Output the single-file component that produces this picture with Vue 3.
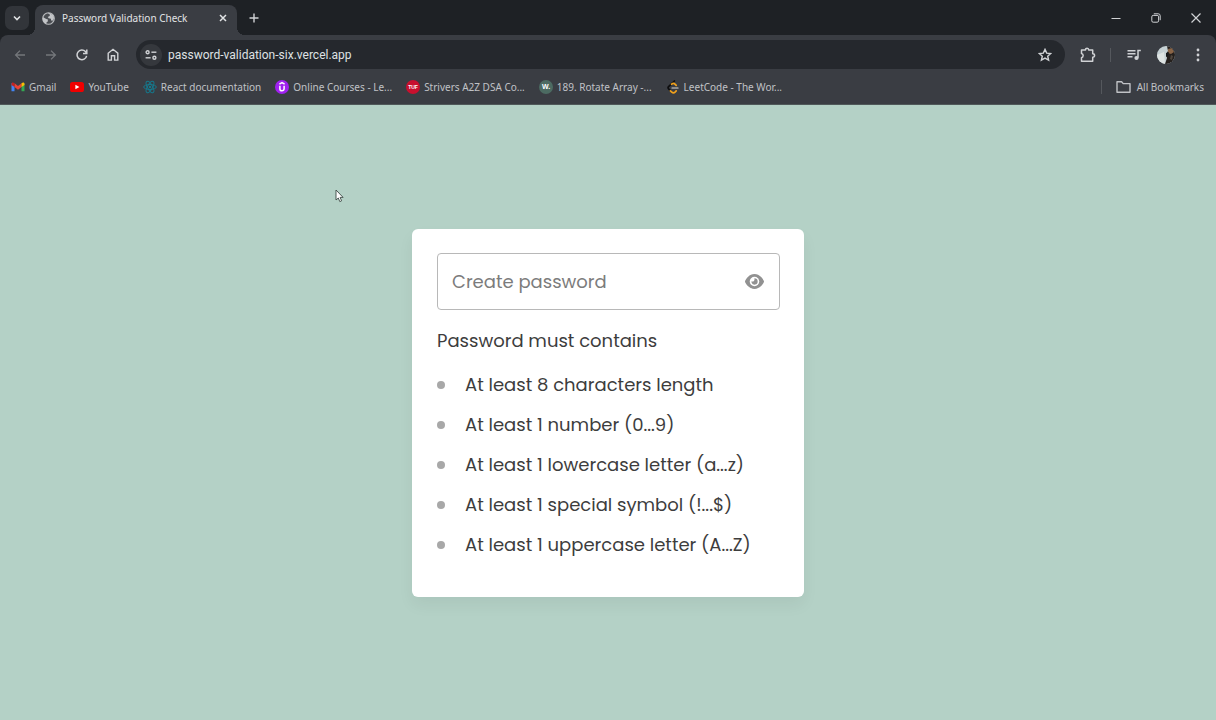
<script setup>
import { ref } from 'vue';

const address = ref('password-validation-six.vercel.app');
const password = ref('');
const visible = ref(false);

const bookmarks = [
  { icon: 'gmail', label: 'Gmail' },
  { icon: 'youtube', label: 'YouTube' },
  { icon: 'react', label: 'React documentation' },
  { icon: 'udemy', label: 'Online Courses - Le...' },
  { icon: 'tuf', label: 'Strivers A2Z DSA Co...' },
  { icon: 'rotate', label: '189. Rotate Array -...' },
  { icon: 'leetcode', label: 'LeetCode - The Wor...' }
];

const requirements = [
  { text: 'At least 8 characters length', test: /.{8,}/ },
  { text: 'At least 1 number (0...9)', test: /[0-9]/ },
  { text: 'At least 1 lowercase letter (a...z)', test: /[a-z]/ },
  { text: 'At least 1 special symbol (!...$)', test: /[^A-Za-z0-9]/ },
  { text: 'At least 1 uppercase letter (A...Z)', test: /[A-Z]/ }
];
</script>

<template>
  <div class="browser">
    <header class="chrome">
      <div class="tab-strip">
        <button class="tab-search" aria-label="Search tabs">
          <svg width="10" height="10" viewBox="0 0 10 10"><path d="M2 3.5l3 3 3-3" fill="none" stroke="currentColor" stroke-width="1.6" /></svg>
        </button>
        <div class="tab">
          <svg class="globe" width="13" height="13" viewBox="0 0 14 14">
            <circle cx="7" cy="7" r="6.2" fill="#4a4d52" stroke="#b9bbbe" stroke-width="1.3" />
            <path d="M1.2 5.6L4.6 7.6 6.4 8.2 6.2 10.2 4.8 11.2 4.6 13A6.3 6.3 0 0 1 1.2 5.6zM6.2 1L8 1.2 12 3.4 13 6.4 11.4 9.4 9.8 9.2 9.6 7.2 7.2 6.8 6.2 5.4 8.2 4.4 8.6 3z" fill="#c3c5c8" />
          </svg>
          <span class="tab-title">Password Validation Check</span>
          <button class="icon-btn tab-close" aria-label="Close tab">
            <svg width="8" height="8" viewBox="0 0 8 8"><path d="M1 1l6 6M7 1L1 7" stroke="currentColor" stroke-width="1.5" /></svg>
          </button>
        </div>
        <button class="icon-btn new-tab" aria-label="New tab">
          <svg width="10" height="10" viewBox="0 0 10 10"><path d="M5 0.5v9M0.5 5h9" stroke="currentColor" stroke-width="1.4" /></svg>
        </button>
        <div class="window-controls">
          <button class="icon-btn" aria-label="Minimize">
            <svg width="10" height="10" viewBox="0 0 10 10"><path d="M0.5 5.5h9" stroke="currentColor" /></svg>
          </button>
          <button class="icon-btn" aria-label="Restore">
            <svg width="10" height="10" viewBox="0 0 10 10" fill="none" stroke="currentColor">
              <rect x="0.8" y="2.4" width="6.8" height="6.8" rx="1.4" />
              <path d="M2.8 0.8h4.4a2 2 0 0 1 2 2v4.4" />
            </svg>
          </button>
          <button class="icon-btn" aria-label="Close">
            <svg width="10" height="10" viewBox="0 0 10 10"><path d="M0.5 0.5l9 9M9.5 0.5l-9 9" stroke="currentColor" stroke-width="1.2" /></svg>
          </button>
        </div>
      </div>

      <div class="toolbar">
        <button class="icon-btn nav-btn dim" aria-label="Back">
          <svg width="12" height="12" viewBox="0 0 12 12"><path d="M11 6H1.8M6 1.6L1.6 6 6 10.4" fill="none" stroke="currentColor" stroke-width="1.3" /></svg>
        </button>
        <button class="icon-btn nav-btn dim" aria-label="Forward">
          <svg width="12" height="12" viewBox="0 0 12 12"><path d="M1 6h9.2M6 1.6L10.4 6 6 10.4" fill="none" stroke="currentColor" stroke-width="1.3" /></svg>
        </button>
        <button class="icon-btn nav-btn" aria-label="Reload">
          <svg width="12" height="12" viewBox="0 0 12 12"><path d="M10.6 6.8A4.8 4.8 0 1 1 9.4 2.6L10.6 4M10.8 0.6V4.4H7" fill="none" stroke="currentColor" stroke-width="1.5" /></svg>
        </button>
        <button class="icon-btn nav-btn" aria-label="Home">
          <svg width="12" height="13" viewBox="0 0 12 13"><path d="M1.2 5.2L6 1.3l4.8 3.9v6.9H7.6V7.8H4.4v4.3H1.2z" fill="none" stroke="currentColor" stroke-width="1.4" /></svg>
        </button>
        <div class="omnibox">
          <button class="site-info" aria-label="View site information">
            <svg width="12" height="10" viewBox="0 0 12 10" fill="none" stroke="currentColor" stroke-width="1.4">
              <circle cx="2.6" cy="2.2" r="1.5" /><path d="M6.4 2.2h5" />
              <circle cx="9.4" cy="7.8" r="1.5" /><path d="M0.6 7.8h5" />
            </svg>
          </button>
          <input v-model="address" class="address" type="text" aria-label="Address bar" />
          <button class="icon-btn star" aria-label="Bookmark this tab">
            <svg width="14" height="14" viewBox="0 0 14 14"><path d="M7 1.4l1.7 3.7 4 .4-3 2.7.9 4L7 10.1l-3.6 2.1.9-4-3-2.7 4-.4z" fill="none" stroke="currentColor" stroke-width="1.4" /></svg>
          </button>
        </div>
        <button class="icon-btn extensions" aria-label="Extensions">
          <svg width="16" height="16" viewBox="0 0 16 16"><path d="M1.5 3h4c0-2.4 3.2-2.4 3.2 0h4v3.8c2.5 0 2.5 3.4 0 3.4v4.1H1.5v-3.5c2.2-.5 2.2-3.9 0-4.4z" fill="none" stroke="currentColor" stroke-width="1.5" stroke-linejoin="round" /></svg>
        </button>
        <span class="divider"></span>
        <button class="icon-btn media" aria-label="Media controls">
          <svg width="14" height="12" viewBox="0 0 14 12">
            <path d="M0.5 1.8h8M0.5 4.8h8M0.5 7.8h5M11 8.8V1.6h2.8" fill="none" stroke="currentColor" stroke-width="1.5" />
            <circle cx="9.5" cy="9" r="2.1" fill="currentColor" />
          </svg>
        </button>
        <button class="icon-btn avatar" aria-label="Profile">
          <svg width="18" height="18" viewBox="0 0 18 18">
            <clipPath id="avatar-clip"><circle cx="9" cy="9" r="9" /></clipPath>
            <g clip-path="url(#avatar-clip)">
              <path d="M0 0h18v18H0z" fill="#c5d0d3" />
              <path d="M0 9l7-3 1 12H0z" fill="#dde3e2" />
              <path d="M10 0h8v18H8l2-6-1-4 2-3z" fill="#25201d" />
              <path d="M11 3l4-1 2 4-3 2-3-1z" fill="#8a6547" />
              <path d="M9 7l3-1-1 4-2 1z" fill="#17191b" />
              <path d="M14 9l2 1-1 4-2-1z" fill="#51473e" />
            </g>
          </svg>
        </button>
        <button class="icon-btn menu" aria-label="Menu">
          <svg width="4" height="14" viewBox="0 0 4 14" fill="currentColor">
            <circle cx="2" cy="2" r="1.4" /><circle cx="2" cy="7" r="1.4" /><circle cx="2" cy="12" r="1.4" />
          </svg>
        </button>
      </div>

      <nav class="bookmarks" aria-label="Bookmarks">
        <a v-for="item in bookmarks" :key="item.icon" href="#" class="bookmark">
          <svg v-if="item.icon === 'gmail'" width="14" height="14" viewBox="0 0 14 14">
            <path d="M0.5 3v8.2h3V6z" fill="#4285f4" />
            <path d="M13.5 3v8.2h-3V6z" fill="#34a853" />
            <path d="M3.5 3.3L7 6l3.5-2.7v3.8L7 9.7 3.5 7.1z" fill="#ea4335" />
            <path d="M0.5 4.2C.5 2.4 2 2 3.5 3.3v3.8l-3-2.2z" fill="#c5221f" />
            <path d="M13.5 4.2c0-1.8-1.5-2.2-3-.9v3.8l3-2.2z" fill="#fbbc04" />
          </svg>
          <svg v-else-if="item.icon === 'youtube'" width="14" height="14" viewBox="0 0 14 14">
            <rect y="2" width="14" height="10" rx="2.6" fill="#f00000" />
            <path d="M5.4 4.8L9.4 7l-4 2.2z" fill="#fff" />
          </svg>
          <svg v-else-if="item.icon === 'react'" width="14" height="14" viewBox="0 0 14 14" fill="none" stroke="#16788c">
            <ellipse cx="7" cy="7" rx="6.3" ry="2.5" />
            <ellipse cx="7" cy="7" rx="6.3" ry="2.5" transform="rotate(60 7 7)" />
            <ellipse cx="7" cy="7" rx="6.3" ry="2.5" transform="rotate(120 7 7)" />
            <circle cx="7" cy="7" r="1.2" fill="#16788c" stroke="none" />
          </svg>
          <svg v-else-if="item.icon === 'udemy'" width="14" height="14" viewBox="0 0 14 14">
            <circle cx="7" cy="7" r="7" fill="#a020f0" />
            <path d="M4.4 4.200L7 2.700l2.600 1.500M4.900 5.800v2.900a2.100 2.100 0 0 0 4.200 0V5.800" fill="none" stroke="#fff" stroke-width="1.5" />
          </svg>
          <svg v-else-if="item.icon === 'tuf'" width="14" height="14" viewBox="0 0 14 14">
            <circle cx="7" cy="7" r="7" fill="#c8102e" />
            <text x="7" y="9" text-anchor="middle" class="tuf-text">TUF</text>
          </svg>
          <svg v-else-if="item.icon === 'rotate'" width="14" height="14" viewBox="0 0 14 14">
            <circle cx="7" cy="7" r="7" fill="#4c6b62" />
            <text x="7" y="9" text-anchor="middle" class="w-text">W.</text>
          </svg>
          <svg v-else width="14" height="14" viewBox="0 0 14 14" fill="none" stroke-linecap="round" stroke-width="1.7">
            <path d="M8.4 1L2.6 6.6a1.6 1.6 0 0 0 0 2.2l1.6 1.700" stroke="#0d0d0e" />
            <path d="M4.4 10.8l1.4 1.300c1 .9 2.300.9 3.200 0l1.200-1.300M5.600 4.200c1.200-1 2.600-.9 3.600.1l1 1" stroke="#f0a11c" />
            <path d="M6.2 8h5.6" stroke="#a8a8a8" />
          </svg>
          <span>{{ item.label }}</span>
        </a>
        <span class="divider all-divider"></span>
        <a href="#" class="bookmark all">
          <svg width="15" height="14" viewBox="0 0 15 14"><path d="M1 12.2V1.8h4.6l1.6 1.8H14v8.6z" fill="none" stroke="currentColor" stroke-width="1.4" stroke-linejoin="round" /></svg>
          <span>All Bookmarks</span>
        </a>
      </nav>
    </header>

    <main class="page">
      <section class="card">
        <div class="field">
          <input v-model="password" :type="visible ? 'text' : 'password'" placeholder="Create password" aria-label="Create password" />
          <button class="eye" aria-label="Show password" @click="visible = !visible">
            <svg width="19" height="17" viewBox="0 0 576 512">
              <path d="M288 32c-80.800 0-145.500 36.800-192.600 80.600C48.600 156 17.300 208 2.500 243.700c-3.300 7.900-3.300 16.700 0 24.600C17.300 304 48.600 356 95.400 399.400C142.500 443.200 207.200 480 288 480s145.500-36.800 192.600-80.600c46.800-43.500 78.100-95.400 93-131.100c3.300-7.900 3.300-16.700 0-24.600c-14.900-35.700-46.200-87.700-93-131.100C433.500 68.800 368.800 32 288 32z" fill="currentColor" />
              <circle cx="288" cy="256" r="144" fill="#fff" />
              <path d="M288 160a96 96 0 1 1-92.500 121.500c-1.900-6.900-2.900-13.800-3.200-20.700c-.2-5.800 6.200-9.200 11.700-7.400c6.400 2.100 13.200 3.300 20.300 3.300c35.300 0 64-28.700 64-64c0-7.100-1.200-13.900-3.300-20.300c-1.800-5.500 1.600-11.900 3-12.400z" fill="currentColor" />
            </svg>
          </button>
        </div>
        <p class="heading">Password must contains</p>
        <ul class="requirements">
          <li v-for="req in requirements" :key="req.text" :class="{ valid: req.test.test(password) }">
            <i class="dot"></i>
            <span>{{ req.text }}</span>
          </li>
        </ul>
      </section>
      <!-- Mouse pointer -->
      <svg class="pointer" width="9" height="14" viewBox="0 0 9 14"><path d="M1 1v10l2.300-2 1.500 3.600 1.800-.8-1.500-3.400h3z" fill="#fff" stroke="#3d4a45" stroke-width="0.9" /></svg>
    </main>
  </div>
</template>

<style>
body {
  margin: 0;
  background: #b4d1c6;
}
</style>

<style scoped>
* {
  box-sizing: border-box;
}

.browser {
  display: flex;
  flex-direction: column;
  min-height: 100vh;
  font-family: "Segoe UI", "Noto Sans", sans-serif;
  font-size: 11px;
}

button {
  padding: 0;
  border: none;
  background: none;
  color: inherit;
  cursor: pointer;
}

svg {
  display: block;
  flex-shrink: 0;
}

.icon-btn {
  display: flex;
  align-items: center;
  justify-content: center;
  flex-shrink: 0;
}

/* Browser frame */
.chrome {
  background: #1e2125;
  color: #d0d2d5;
}

.tab-strip {
  display: flex;
  align-items: center;
  height: 35px;
  padding-left: 5px;
}

.tab-search {
  display: flex;
  align-items: center;
  justify-content: center;
  width: 24px;
  height: 24px;
  border-radius: 7px;
  background: #32353a;
  color: #e0e2e4;
}

.tab {
  position: relative;
  display: flex;
  align-items: center;
  align-self: flex-end;
  gap: 7px;
  width: 202px;
  height: 30px;
  margin-left: 6px;
  padding: 0 8px 4px 7px;
  border-radius: 8px 8px 0 0;
  background: #3a3d43;
  color: #e1e3e5;
}

.tab::before,
.tab::after {
  content: "";
  position: absolute;
  bottom: 0;
  width: 8px;
  height: 8px;
}

.tab::before {
  right: 100%;
  background: radial-gradient(circle at 0 0, transparent 8px, #3a3d43 8px);
}

.tab::after {
  left: 100%;
  background: radial-gradient(circle at 100% 0, transparent 8px, #3a3d43 8px);
}

.tab-title {
  flex: 1;
  white-space: nowrap;
  font-size: 10px;
}

.tab-close {
  width: 12px;
  height: 16px;
}

.new-tab {
  width: 24px;
  height: 24px;
  margin-left: 5px;
}

.window-controls {
  display: flex;
  margin-left: auto;
}

.window-controls .icon-btn {
  width: 40px;
  height: 34px;
}

.toolbar {
  display: flex;
  align-items: center;
  height: 39px;
  padding: 0 8px 0 4px;
  border-radius: 8px 8px 0 0;
  background: #3a3d43;
}

.nav-btn {
  width: 31px;
  height: 28px;
}

.dim {
  color: #74777b;
}

.omnibox {
  display: flex;
  align-items: center;
  flex: 1;
  height: 29px;
  margin-left: 8px;
  padding: 0 13px 0 4px;
  border-radius: 15px;
  background: #25282d;
}

.site-info {
  display: flex;
  align-items: center;
  justify-content: center;
  width: 22px;
  height: 22px;
  border-radius: 50%;
  background: #35383d;
}

.address {
  flex: 1;
  min-width: 0;
  padding: 0 0 0 6px;
  border: none;
  outline: none;
  background: none;
  color: #dfe1e3;
  font-family: "Segoe UI", Roboto, sans-serif;
  font-size: 12px;
}

.extensions {
  width: 30px;
  height: 28px;
  margin-left: 8px;
}

.divider {
  width: 1px;
  height: 14px;
  background: #55585d;
}

.toolbar .divider {
  margin: 0 7px;
}

.media {
  width: 32px;
  height: 28px;
}

.avatar {
  width: 18px;
  height: 18px;
  margin-left: 7px;
}

.menu {
  width: 20px;
  height: 28px;
  margin-left: 13px;
}

.bookmarks {
  display: flex;
  align-items: center;
  gap: 14px;
  height: 31px;
  padding: 0 12px 5px 11px;
  border-bottom: 1px solid #50595a;
  background: #3a3d43;
}

.bookmark {
  display: flex;
  align-items: center;
  gap: 4px;
  color: #c0c2c6;
  font-size: 10px;
  text-decoration: none;
  white-space: nowrap;
}

.all-divider {
  margin-left: auto;
}

.all {
  gap: 6px;
}

.tuf-text,
.w-text {
  fill: #fff;
  font-family: "Liberation Sans", sans-serif;
  font-size: 5px;
  font-weight: bold;
}

.w-text {
  font-size: 7px;
}

/* Page */
.page {
  position: relative;
  display: flex;
  align-items: center;
  justify-content: center;
  flex: 1;
  padding: 24px;
  background: #b4d1c6;
  font-family: Poppins, Inter, sans-serif;
  font-size: 18px;
  color: #3d3d3d;
}

.card {
  width: 100%;
  max-width: 392px;
  padding: 24px 24px 37px 25px;
  border-radius: 6px;
  background: #fff;
  box-shadow: 0 8px 16px rgba(0, 0, 0, 0.05);
}

.field {
  display: flex;
  align-items: center;
  height: 57px;
  padding: 0 15px 0 14px;
  border: 1px solid #b8b8b8;
  border-radius: 4px;
}

.field:focus-within {
  border-color: #4285f4;
}

.field input {
  flex: 1;
  min-width: 0;
  height: 100%;
  padding: 0;
  border: none;
  outline: none;
  background: none;
  color: #3d3d3d;
  font-family: inherit;
  font-size: 18px;
}

.field input::placeholder {
  color: #7c7c7c;
}

.eye {
  color: #919191;
}

.heading {
  margin: 16px 0 14px;
  line-height: 30px;
}

.requirements {
  display: flex;
  flex-direction: column;
  gap: 10px;
  margin: 0;
  padding: 0;
  list-style: none;
}

.requirements li {
  display: flex;
  align-items: center;
  gap: 20px;
  line-height: 30px;
  white-space: nowrap;
}

.dot {
  width: 8px;
  height: 8px;
  border-radius: 50%;
  background: #a8a8a8;
}

.valid .dot {
  background: #4285f4;
}

.pointer {
  position: absolute;
  top: 84px;
  left: 335px;
}
</style>
